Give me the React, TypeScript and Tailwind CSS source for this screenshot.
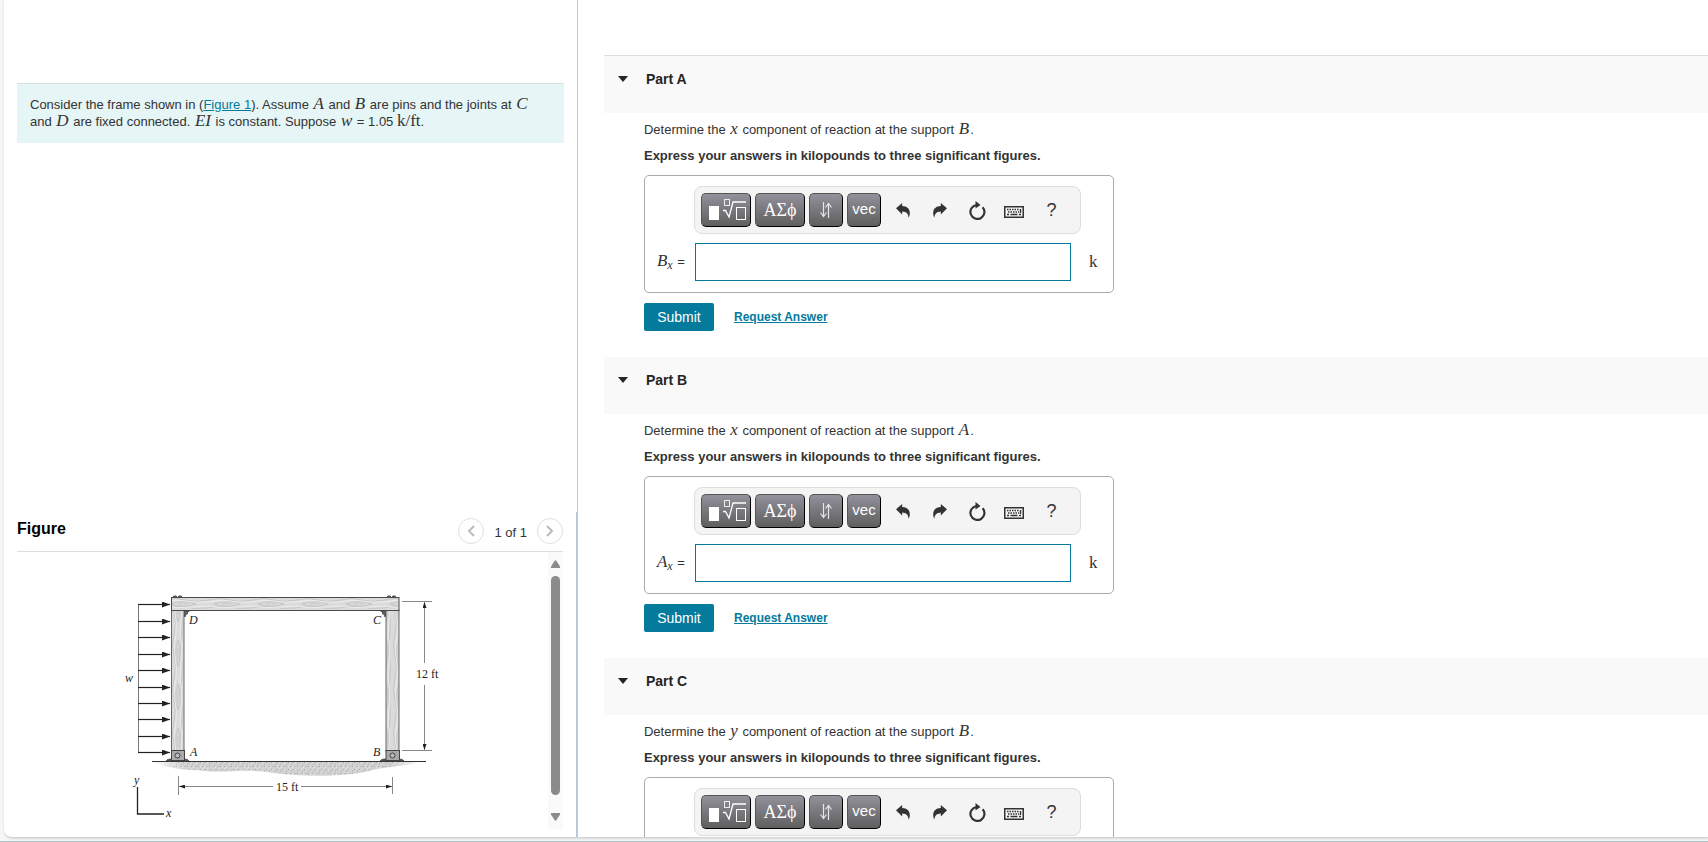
import React, { useState } from "react";

const parts = [
    { id: "A", axis: "x", support: "B" },
    { id: "B", axis: "x", support: "A" },
    { id: "C", axis: "y", support: "B" },
];

const loadArrows = [14, 31, 47, 64, 80, 97, 113, 129, 146, 162];

function MathVar({ children }: { children: React.ReactNode }) {
    return <span className="mx-px font-['Liberation_Serif',serif] text-[17px] leading-[0px] italic">{children}</span>;
}

function TemplateIcon() {
    return (
        <svg width="38" height="24" viewBox="0 0 38 24" fill="none" stroke="#fff">
            <rect x="1" y="8" width="10" height="14" fill="#fff" stroke="none" />
            <rect x="16.5" y="1.5" width="5" height="6" strokeWidth="1" opacity=".85" />
            <path d="M15 12.5h2.5l3.5 6.5 4-15h13" strokeWidth="1.3" />
            <rect x="28.5" y="9.5" width="9" height="12" strokeWidth="1" />
        </svg>
    );
}

function ArrowsIcon() {
    return (
        <svg width="14" height="16" viewBox="0 0 14 16" fill="none" stroke="#e6e6e8" strokeWidth="1.2">
            <path d="M4.5 0v14M1.5 10.5l3 4 3-4M9.5 16V2M6.5 5.5l3-4 3 4" />
        </svg>
    );
}

function UndoIcon({ flip = false }: { flip?: boolean }) {
    return (
        <svg width="14" height="15" viewBox="0 0 14 15" fill="#333">
            <g transform={flip ? "translate(14 0) scale(-1 1)" : undefined}>
                <path d="M0 5.2 6.2 0v3c4.4 .2 7.6 2.5 7.6 7 0 2-.5 3.5-1.2 4.8-.1-4-2-6.200-6.400-6.400v3z" />
            </g>
        </svg>
    );
}

function ResetIcon() {
    return (
        <svg width="18" height="19" viewBox="0 0 18 19">
            <path d="M14.6 6.2A7 7 0 1 1 8.5 4" fill="none" stroke="#333" strokeWidth="2.2" />
            <path d="M7.5 0v7.6L12.5 4z" fill="#333" />
        </svg>
    );
}

function KeyboardIcon() {
    return (
        <svg width="20" height="12" viewBox="0 0 20 12" fill="none" stroke="#333">
            <rect x=".75" y=".75" width="18.5" height="10.5" strokeWidth="1.5" />
            <path d="M3 3.5h12M4 6h11" strokeWidth="1.3" strokeDasharray="1.5 1" />
            <path d="M16.5 3v4M3 8.5h2M6.5 8.5h7M15 8.5h2" strokeWidth="1.4" />
        </svg>
    );
}

function FrameFigure() {
    return (
        <svg width="320" height="234" viewBox="0 0 320 234" role="img" aria-label="Portal frame ABCD">
            <defs>
                <pattern id="grain" width="44" height="13" patternUnits="userSpaceOnUse" y="7">
                    <rect width="44" height="13" fill="#dcdcdc" />
                    <path d="M0 3q12-3 22 0t22 0M0 11q10-3 20-1t24 1M6 7q14-5 26 0-12 4-26 0M14 7q5-2 11 0" fill="none" stroke="#bcbcbc" strokeWidth=".7" />
                    <path d="M0 5q12-3 22-1t22 1M0 9q16 3 44 0" fill="none" stroke="#f0f0f0" strokeWidth=".8" />
                </pattern>
                <pattern id="grainUp" width="13" height="44" patternUnits="userSpaceOnUse" x="51">
                    <rect width="13" height="44" fill="#dadada" />
                    <path d="M3 0q-3 12 0 22t0 22M11 0q-3 10-1 20t1 24M7 6q-5 14 0 26 4-12 0-26M7 14q-2 5 0 11" fill="none" stroke="#bcbcbc" strokeWidth=".7" />
                    <path d="M5 0q-3 12-1 22t1 22M9 0q3 16 0 44" fill="none" stroke="#f0f0f0" strokeWidth=".8" />
                </pattern>
                <pattern id="gravel" width="11" height="7" patternUnits="userSpaceOnUse">
                    <rect width="11" height="7" fill="#d2d2d2" />
                    <path d="M1 1l1 1M5 2l1-1M8 4l1 1M3 5l1-1M10 1v1M6 6h1M1 6h1" stroke="#9c9c9c" strokeWidth=".8" />
                    <path d="M3 2h1M7 2l1 1M5 4h1M10 5h1" stroke="#eee" strokeWidth=".8" />
                </pattern>
                <linearGradient id="fade">
                    <stop offset="0" stopColor="#fff" />
                    <stop offset=".12" stopColor="#fff" stopOpacity="0" />
                    <stop offset=".88" stopColor="#fff" stopOpacity="0" />
                    <stop offset="1" stopColor="#fff" />
                </linearGradient>
                <marker id="head" markerUnits="userSpaceOnUse" markerWidth="9" markerHeight="6" refX="8" refY="3" orient="auto">
                    <path d="M0 0 8 3 0 6z" fill="#222" />
                </marker>
                <marker id="dimHead" markerUnits="userSpaceOnUse" markerWidth="7" markerHeight="4" refX="6" refY="2" orient="auto">
                    <path d="M0 0 6 2 0 4z" fill="#222" />
                </marker>
            </defs>

            {/* distributed load */}
            <path d="M18.5 14v149" stroke="#777" />
            {loadArrows.map((y) => (
                <path key={y} d={`M18 ${y + 0.5}H50`} stroke="#222" strokeWidth="1.2" markerEnd="url(#head)" />
            ))}

            {/* ground */}
            <path d="M33 172c16 8 34 7 52 9s42-2 62 1 50 5 74 3 26-4 36-6 26-3 45-7z" fill="url(#gravel)" />
            <path d="M32 172h272v15H32z" fill="url(#fade)" />
            <path d="M32 171.5h274" stroke="#333" strokeWidth="1.2" />

            {/* columns and beam */}
            <rect x="51.5" y="20" width="12.5" height="141" fill="url(#grainUp)" stroke="#666" />
            <rect x="266" y="20" width="13" height="141" fill="url(#grainUp)" stroke="#666" />
            <rect x="51.5" y="7.5" width="227.5" height="13" fill="url(#grain)" stroke="#4a4a4a" />
            <path d="M53 6.500q2-1.500 4 0zM58 6.500q2-1.500 4 0zM267 6.500q2-1.500 4 0zM272 6.500q2-1.500 4 0z" fill="#444" stroke="#444" strokeWidth=".7" />
            <path d="M64.5 21h5l-2 1v2l-2 .5v2h-1zM265.5 21h-5l2 1v2l2 .5v2h1z" fill="#59656b" stroke="#444" strokeWidth=".8" />

            {/* pin supports */}
            <path d="M46 171q1-2 4-2h15q3 0 4 2zM260 171q1-2 4-2h16q3 0 4 2z" fill="#555" stroke="#444" strokeWidth=".7" />
            <rect x="51.5" y="160.5" width="13" height="10" fill="#a9a9a9" stroke="#444" />
            <rect x="266" y="160.5" width="13.5" height="10" fill="#a9a9a9" stroke="#444" />
            <circle cx="57.5" cy="165.5" r="2.5" fill="#bbb" stroke="#444" />
            <circle cx="272.5" cy="165.5" r="2.5" fill="#bbb" stroke="#444" />

            {/* dimensions */}
            <g stroke="#888" fill="none">
                <path d="M282 11.5h30M282 160.5h30M58.5 186v19M272.5 187v17" />
                <path d="M304.5 73V12" markerEnd="url(#dimHead)" />
                <path d="M304.5 95v65" markerEnd="url(#dimHead)" />
                <path d="M153 196.500H59" markerEnd="url(#dimHead)" />
                <path d="M181 196.500h91" markerEnd="url(#dimHead)" />
            </g>
            <path d="M17.5 197v27H44" fill="none" stroke="#222" strokeWidth="1.3" />

            <g className="font-['Liberation_Serif',serif] text-[12px]" fill="#222">
                <text x="296" y="88">12 ft</text>
                <text x="156" y="201">15 ft</text>
                <g fontStyle="italic">
                    <text x="5" y="92">w</text>
                    <text x="69" y="34">D</text>
                    <text x="253" y="34">C</text>
                    <text x="70" y="166">A</text>
                    <text x="253" y="166">B</text>
                    <text x="14" y="194">y</text>
                    <text x="46" y="227">x</text>
                </g>
            </g>
        </svg>
    );
}

const keyClass =
    "flex h-[34px] items-center justify-center rounded-[5px] border border-t-[#555] border-r-black border-b-black border-l-[#555] bg-linear-to-b from-[#93919b] to-[#5f5f5f] text-white";
const toolClass = "flex h-[34px] w-[37px] items-center justify-center text-[#333]";

function Part({ id, axis, support }: { id: string; axis: string; support: string }) {
    const [value, setValue] = useState("");
    const [open, setOpen] = useState(true);

    return (
        <section>
            <h2 className="h-[57px] bg-[#f9f9f9] pt-[13px]">
                <button type="button" onClick={() => setOpen(!open)} className="flex items-center gap-[18px] pl-[14px] text-sm font-bold text-[#252525]">
                    <svg width="10" height="6" viewBox="0 0 10 6" fill="#252525">
                        <path d="M0 0h10L5 6z" />
                    </svg>
                    Part {id}
                </button>
            </h2>
            {open && (
                <div className="pt-2 pb-[26px] pl-10">
                    <p className="h-[18px] leading-[18px]">
                        Determine the <MathVar>{axis}</MathVar> component of reaction at the support <MathVar>{support}</MathVar>.
                    </p>
                    <p className="mt-2 font-bold leading-[18px]">Express your answers in kilopounds to three significant figures.</p>

                    <div className="mt-[10px] w-[470px] rounded-[5px] border border-[#aaa] pt-[10px] pb-[11px]">
                        <div className="ml-[49px] flex h-12 w-[387px] items-center gap-1 rounded-lg border border-[#ddd] bg-[#f4f4f4] pl-[6px]">
                            <button type="button" aria-label="Templates" className={`${keyClass} w-[50px] pl-[2px]`}>
                                <TemplateIcon />
                            </button>
                            <button type="button" aria-label="Symbols" className={`${keyClass} w-[50px] font-['Liberation_Serif',serif] text-lg`}>
                                ΑΣϕ
                            </button>
                            <button type="button" aria-label="Arrows" className={`${keyClass} w-[34px]`}>
                                <ArrowsIcon />
                            </button>
                            <button type="button" className={`${keyClass} w-[34px] pb-[2px] text-[15px]`}>
                                vec
                            </button>
                            <div className="flex">
                                <button type="button" aria-label="Undo" className={toolClass}>
                                    <UndoIcon />
                                </button>
                                <button type="button" aria-label="Redo" className={toolClass}>
                                    <UndoIcon flip />
                                </button>
                                <button type="button" aria-label="Reset" className={toolClass}>
                                    <ResetIcon />
                                </button>
                                <button type="button" aria-label="Keyboard shortcuts" className={`${toolClass} pt-1`}>
                                    <KeyboardIcon />
                                </button>
                                <button type="button" aria-label="Help" className={`${toolClass} text-lg`}>
                                    ?
                                </button>
                            </div>
                        </div>
                        <div className="mt-[9px] flex items-center">
                            <label htmlFor={`answer-${id}`} className="w-[50px] pl-[11px] whitespace-nowrap">
                                <MathVar>
                                    {support}
                                    <sub className="text-xs leading-[0px]">{axis}</sub>
                                </MathVar>{" "}
                                =
                            </label>
                            <input
                                id={`answer-${id}`}
                                type="text"
                                value={value}
                                onChange={(e) => setValue(e.target.value)}
                                className="h-[38px] w-[376px] border border-[#047a9c] bg-white px-2 outline-none"
                            />
                            <span className="ml-[18px] font-['Liberation_Serif',serif] text-[17px]">k</span>
                        </div>
                    </div>

                    <div className="mt-[10px] flex items-center gap-5">
                        <button type="button" className="h-7 w-[70px] rounded-xs bg-[#047a9c] text-sm text-white">
                            Submit
                        </button>
                        <a href="#answer" className="text-xs font-bold text-[#047a9c] underline">
                            Request Answer
                        </a>
                    </div>
                </div>
            )}
        </section>
    );
}

export default function App() {
    return (
        <div className="flex h-screen flex-col overflow-hidden border-b border-[#a9c4c1] bg-[#f6f6f6] pb-[3px] pl-1 font-['Liberation_Sans',Arial,sans-serif] text-[13px] text-[#333]">
            <main className="grid min-h-0 flex-1 grid-cols-[32fr_63fr] overflow-hidden rounded-bl-lg border-b border-[#d4d4d4] bg-white shadow">
                <div className="flex min-h-0 flex-col">
                    <div className="flex-1 border-r border-[#b8cbdc] pt-[83px] pr-[13px] pl-[13px]">
                        <div className="border-t border-[#d9dede] bg-[#e6f5f5] pt-3 pr-6 pb-[13px] pl-[13px] leading-[17px]">
                            <p>
                                Consider the frame shown in (
                                <a href="#figure" className="text-[#047a9c] underline">
                                    Figure 1
                                </a>
                                ). Assume <MathVar>A</MathVar> and <MathVar>B</MathVar> are pins and the joints at <MathVar>C</MathVar> and <MathVar>D</MathVar> are fixed connected.{" "}
                                <MathVar>EI</MathVar> is constant. Suppose <MathVar>w</MathVar> = 1.05{" "}
                                <span className="font-['Liberation_Serif',serif] text-[17px] leading-[0px]">k/ft</span>.
                            </p>
                        </div>
                    </div>

                    <div id="figure" className="border-r-2 border-[#b8cbdc] pr-[13px] pl-[13px]">
                        <div className="flex h-10 items-center justify-between border-b border-[#ddd] pb-[2px]">
                            <h2 className="pb-1 text-base font-bold text-black">Figure</h2>
                            <div className="flex items-center gap-[10px]">
                                <button type="button" aria-label="Previous figure" className="flex size-[26px] items-center justify-center rounded-full border border-[#e0e0e0]">
                                    <svg width="8" height="12" viewBox="0 0 8 12" fill="none" stroke="#bbb" strokeWidth="2">
                                        <path d="M7 1 2 6l5 5" />
                                    </svg>
                                </button>
                                <span className="pt-1">1 of 1</span>
                                <button type="button" aria-label="Next figure" className="flex size-[26px] items-center justify-center rounded-full border border-[#e0e0e0]">
                                    <svg width="8" height="12" viewBox="0 0 8 12" fill="none" stroke="#bbb" strokeWidth="2">
                                        <path d="m1 1 5 5-5 5" />
                                    </svg>
                                </button>
                            </div>
                        </div>
                        <div className="flex">
                            <div className="flex flex-1 justify-center pt-[38px] pr-1 pb-[13px]">
                                <FrameFigure />
                            </div>
                            <div className="mb-2 flex w-[15px] flex-col items-center gap-2 bg-[#fafafa] py-2">
                                <svg width="9" height="8" viewBox="0 0 9 8" fill="#8b8b8b">
                                    <path d="M3.5 1q1-1.500 2 0L9 6.500V8H0V6.500z" />
                                </svg>
                                <div className="w-[9px] flex-1 rounded-full bg-[#8b8b8b]" />
                                <svg width="9" height="18" viewBox="0 0 9 18" fill="#8b8b8b">
                                    <path d="M0 10h9v1.500L5.500 17q-1 1.500-2 0L0 11.500z" />
                                </svg>
                            </div>
                        </div>
                    </div>
                </div>

                <div className="min-h-0 overflow-hidden pt-[55px] pl-[26px]">
                    <div className="border-t border-[#ddd]">
                        {parts.map((part) => (
                            <Part key={part.id} {...part} />
                        ))}
                    </div>
                </div>
            </main>
        </div>
    );
}
